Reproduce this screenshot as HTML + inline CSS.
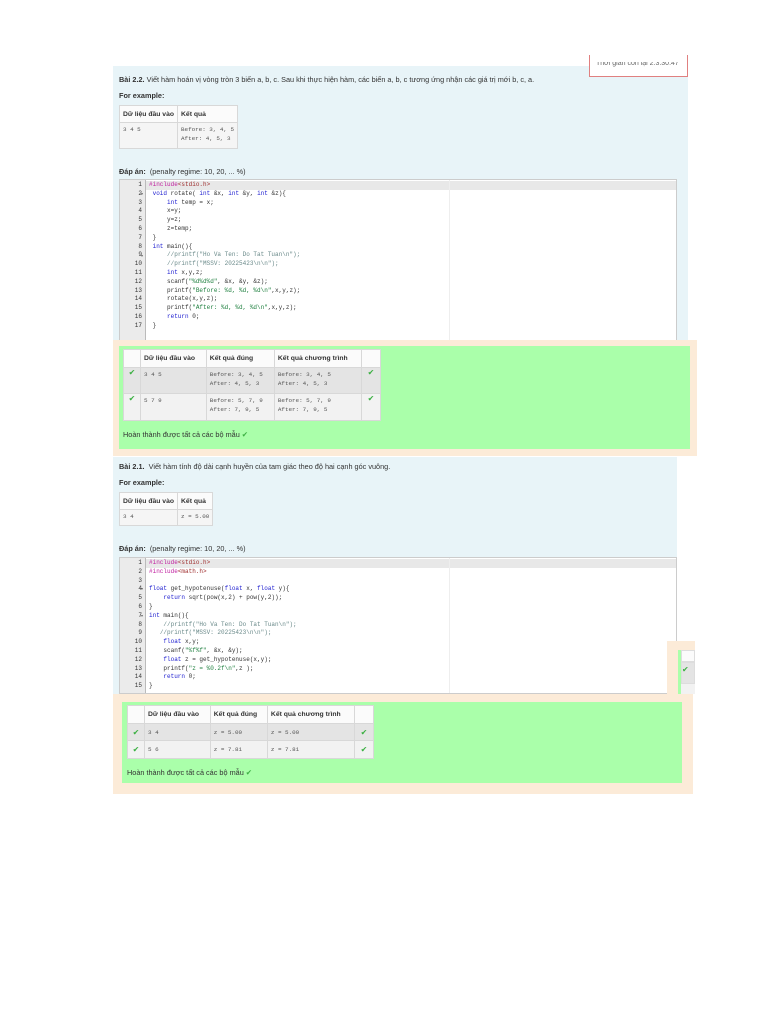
<!DOCTYPE html>
<html><head><meta charset="utf-8"><style>
*{margin:0;padding:0;box-sizing:border-box}
body{width:768px;height:1024px;background:#fff;position:relative;overflow:hidden;font-family:"Liberation Sans",sans-serif;color:#333}
.a{position:absolute}
.t{font-size:7.3px;white-space:nowrap}
.blue{background:#e8f4f8}
.peach{background:#fcebd8}
.green{background:#aaffaa}
table{border-collapse:collapse;position:absolute;font-size:6.8px}
td,th{border:1px solid #d8d8d8;padding:0 3px;vertical-align:top;text-align:left;white-space:nowrap}
th{background:#fbfbfb;font-weight:bold;vertical-align:middle}
.ex td{background:#f5f5f5}
.r1 td{background:#e4e4e4}
.r2 td{background:#f2f2f2}
.ck{color:#3cb043;font-size:8px;text-align:center}
.mono{font-family:"Liberation Mono",monospace;font-size:5.9px;color:#555;line-height:9px}
.code{position:absolute;background:#fff;border:1px solid #ccc;overflow:hidden}
.gut{position:absolute;left:0;top:0;bottom:0;width:26px;background:#ebebeb;border-right:1px solid #bbb}
.ln{position:absolute;font-family:"Liberation Mono",monospace;font-size:6px;color:#333;white-space:pre;line-height:8.8px}
.ar{position:absolute;left:21px;font-size:4px;color:#666;line-height:8.8px}
.hl{position:absolute;left:0;right:0;height:9px;background:#e8e8e8}
.k{color:#2020d0}.s{color:#a03030}.c{color:#6a8a8a}.p{color:#c020a0}.st{color:#208040}
.vl{position:absolute;top:0;bottom:0;width:1px;background:#eee}
</style></head><body>

<!-- section 1 -->
<div class="a blue" style="left:113px;top:66px;width:575px;height:275px"></div>
<div class="a" style="left:589px;top:55px;width:99px;height:22px;border:1px solid #e08080;border-top:none;background:#fff;overflow:hidden"></div>
<div class="a t" style="left:596px;top:62px;font-size:7px;color:#666;height:7px;overflow:hidden;line-height:10px;padding-top:0"><span style="position:relative;top:-3px">Thời gian còn lại 2:3:30:47</span></div>
<div class="a t" style="left:119px;top:75px"><b>Bài 2.2.</b> Viết hàm hoán vị vòng tròn 3 biến a, b, c. Sau khi thực hiện hàm, các biến a, b, c tương ứng nhận các giá trị mới b, c, a.</div>
<div class="a t" style="left:119px;top:91px"><b>For example:</b></div>
<table class="ex" style="left:119px;top:105px;width:113px">
<tr style="height:17px"><th>Dữ liệu đầu vào</th><th>Kết quả</th></tr>
<tr style="height:26px"><td class="mono" style="padding-top:2px">3 4 5</td><td class="mono" style="padding-top:2px">Before: 3, 4, 5<br>After: 4, 5, 3</td></tr>
</table>
<div class="a t" style="left:119px;top:167px"><b>Đáp án:</b> &nbsp;(penalty regime: 10, 20, ... %)</div>

<div class="code" style="left:119px;top:179px;width:558px;height:162px">
<div class="hl" style="top:1px"></div>
<div class="gut"></div>
<div class="vl" style="left:329px"></div>
<div class="ln" style="left:0;top:1px;width:22px;text-align:right">1
2
3
4
5
6
7
8
9
10
11
12
13
14
15
16
17</div>
<div class="ar" style="top:10px">&#9662;</div>
<div class="ar" style="top:72px">&#9662;</div>
<div class="ln" style="left:29px;top:1px"><span class="p">#include</span><span class="s">&lt;stdio.h&gt;</span>
 <span class="k">void</span> rotate( <span class="k">int</span> &amp;x, <span class="k">int</span> &amp;y, <span class="k">int</span> &amp;z){
     <span class="k">int</span> temp = x;
     x=y;
     y=z;
     z=temp;
 }
 <span class="k">int</span> main(){
     <span class="c">//printf("Ho Va Ten: Do Tat Tuan\n");</span>
     <span class="c">//printf("MSSV: 20225423\n\n");</span>
     <span class="k">int</span> x,y,z;
     scanf(<span class="st">"%d%d%d"</span>, &amp;x, &amp;y, &amp;z);
     printf(<span class="st">"Before: %d, %d, %d\n"</span>,x,y,z);
     rotate(x,y,z);
     printf(<span class="st">"After: %d, %d, %d\n"</span>,x,y,z);
     <span class="k">return</span> 0;
 }</div>
</div>

<div class="a peach" style="left:113px;top:340px;width:584px;height:116px"></div>
<div class="a green" style="left:119px;top:346px;width:571px;height:103px"></div>
<table style="left:123px;top:349px;width:258px">
<tr style="height:18px;background:#fbfbfb"><th style="width:17px"></th><th>Dữ liệu đầu vào</th><th>Kết quả đúng</th><th>Kết quả chương trình</th><th style="width:19px"></th></tr>
<tr class="r1" style="height:26px"><td class="ck">&#10004;</td><td class="mono" style="padding-top:2px">3 4 5</td><td class="mono" style="padding-top:2px">Before: 3, 4, 5<br>After: 4, 5, 3</td><td class="mono" style="padding-top:2px">Before: 3, 4, 5<br>After: 4, 5, 3</td><td class="ck">&#10004;</td></tr>
<tr class="r2" style="height:27px"><td class="ck">&#10004;</td><td class="mono" style="padding-top:2px">5 7 9</td><td class="mono" style="padding-top:2px">Before: 5, 7, 9<br>After: 7, 9, 5</td><td class="mono" style="padding-top:2px">Before: 5, 7, 9<br>After: 7, 9, 5</td><td class="ck">&#10004;</td></tr>
</table>
<div class="a t" style="left:123px;top:430px">Hoàn thành được tất cả các bộ mẫu <span style="color:#3cb043">&#10004;</span></div>

<!-- section 2 -->
<div class="a blue" style="left:113px;top:457px;width:564px;height:237px"></div>
<div class="a t" style="left:119px;top:462px"><b>Bài 2.1.</b> &nbsp;Viết hàm tính độ dài cạnh huyền của tam giác theo độ hai cạnh góc vuông.</div>
<div class="a t" style="left:119px;top:478px"><b>For example:</b></div>
<table class="ex" style="left:119px;top:492px;width:91px">
<tr style="height:17px"><th>Dữ liệu đầu vào</th><th>Kết quả</th></tr>
<tr style="height:16px"><td class="mono" style="padding-top:2px">3 4</td><td class="mono" style="padding-top:2px">z = 5.00</td></tr>
</table>
<div class="a t" style="left:119px;top:544px"><b>Đáp án:</b> &nbsp;(penalty regime: 10, 20, ... %)</div>

<div class="code" style="left:119px;top:557px;width:558px;height:137px">
<div class="hl" style="top:1px"></div>
<div class="gut"></div>
<div class="vl" style="left:329px"></div>
<div class="ln" style="left:0;top:1px;width:22px;text-align:right">1
2
3
4
5
6
7
8
9
10
11
12
13
14
15</div>
<div class="ar" style="top:27px">&#9662;</div>
<div class="ar" style="top:54px">&#9662;</div>
<div class="ln" style="left:29px;top:1px"><span class="p">#include</span><span class="s">&lt;stdio.h&gt;</span>
<span class="p">#include</span><span class="s">&lt;math.h&gt;</span>

<span class="k">float</span> get_hypotenuse(<span class="k">float</span> x, <span class="k">float</span> y){
    <span class="k">return</span> sqrt(pow(x,2) + pow(y,2));
}
<span class="k">int</span> main(){
    <span class="c">//printf("Ho Va Ten: Do Tat Tuan\n");</span>
   <span class="c">//printf("MSSV: 20225423\n\n");</span>
    <span class="k">float</span> x,y;
    scanf(<span class="st">"%f%f"</span>, &amp;x, &amp;y);
    <span class="k">float</span> z = get_hypotenuse(x,y);
    printf(<span class="st">"z = %0.2f\n"</span>,z );
    <span class="k">return</span> 0;
}</div>
</div>

<!-- overlapping fragment -->
<div class="a peach" style="left:667px;top:641px;width:28px;height:53px"></div>
<div class="a green" style="left:678px;top:650px;width:17px;height:44px"></div>
<div class="a" style="left:681px;top:650px;width:14px;height:12px;background:#fbfbfb;border:1px solid #ddd"></div>
<div class="a" style="left:681px;top:662px;width:14px;height:22px;background:#e4e4e4;border:1px solid #ddd"></div>
<div class="a ck" style="left:682px;top:665px">&#10004;</div>
<div class="a" style="left:681px;top:684px;width:14px;height:10px;background:#f2f2f2"></div>

<div class="a peach" style="left:113px;top:694px;width:580px;height:100px"></div>
<div class="a green" style="left:122px;top:702px;width:560px;height:81px"></div>
<table style="left:127px;top:705px;width:247px">
<tr style="height:18px;background:#fbfbfb"><th style="width:17px"></th><th>Dữ liệu đầu vào</th><th>Kết quả đúng</th><th>Kết quả chương trình</th><th style="width:19px"></th></tr>
<tr class="r1" style="height:17px"><td class="ck" style="vertical-align:middle">&#10004;</td><td class="mono" style="vertical-align:middle">3 4</td><td class="mono" style="vertical-align:middle">z = 5.00</td><td class="mono" style="vertical-align:middle">z = 5.00</td><td class="ck" style="vertical-align:middle">&#10004;</td></tr>
<tr class="r2" style="height:18px"><td class="ck" style="vertical-align:middle">&#10004;</td><td class="mono" style="vertical-align:middle">5 6</td><td class="mono" style="vertical-align:middle">z = 7.81</td><td class="mono" style="vertical-align:middle">z = 7.81</td><td class="ck" style="vertical-align:middle">&#10004;</td></tr>
</table>
<div class="a t" style="left:127px;top:768px">Hoàn thành được tất cả các bộ mẫu <span style="color:#3cb043">&#10004;</span></div>

</body></html>
